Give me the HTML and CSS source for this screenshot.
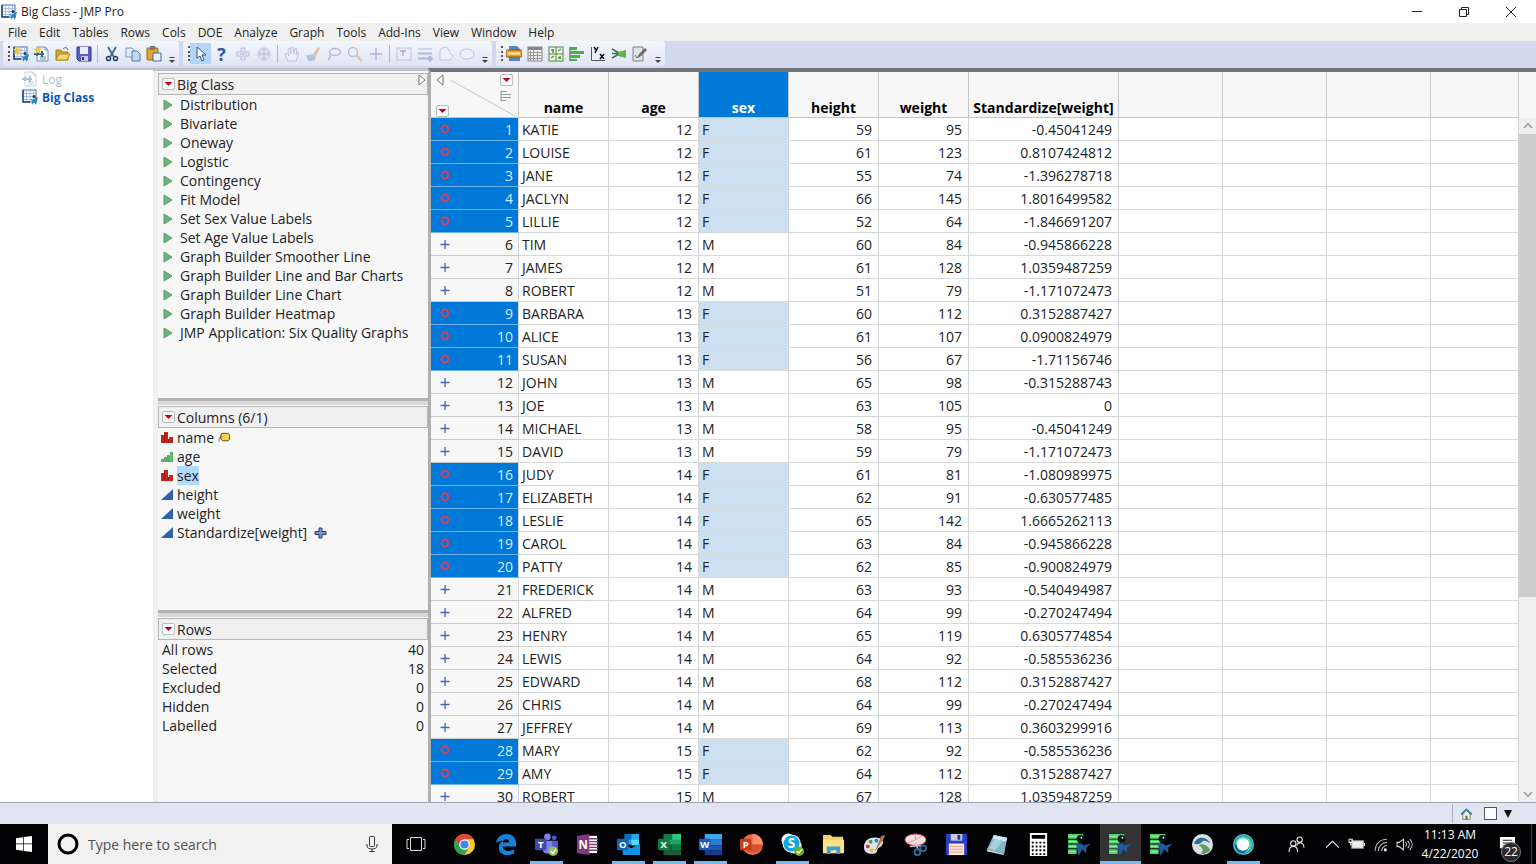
FILE: index.html
```html
<!DOCTYPE html>
<html lang="en">
<head>
  <meta charset="UTF-8">
  <meta name="viewport" content="width=device-width, initial-scale=1.0">
  <title>Big Class - JMP Pro</title>
  <link rel="stylesheet" href="styles.css">
</head>
<body>
<svg class="sprite" aria-hidden="true">
  <symbol id="i-table" viewBox="0 0 16 16">
    <rect x="1" y="1" width="13" height="12" fill="#f4f8fd" stroke="#4a6ea8"/>
    <path d="M1 4.500h13M1 7.500h13M1 10.500h13M4.500 1v12M8 1v12M11.500 1v12" stroke="#9db4d8" stroke-width=".8"/>
    <path d="M1 1v12h7" fill="none" stroke="#23477f" stroke-width="1.500"/>
    <path d="M8 10l3 1 2-2 3-1-1 4-1 4-2-3-2 3v-4z" fill="#2a86c4"/>
    <circle cx="12" cy="7.500" r="1.500" fill="#123f6e"/>
  </symbol>
  <symbol id="i-log" viewBox="0 0 16 16">
    <path d="M3 1h8l3 3v11H3z" fill="#f6f9fc" stroke="#6e8fb8"/>
    <path d="M11 1v3h3M6 11h6M6 13h6" fill="none" stroke="#6e8fb8"/>
    <path d="M0 8h10M8 5v6M3 6v4" fill="none" stroke="#33679f" stroke-width="2"/>
  </symbol>
  <symbol id="i-menu" viewBox="0 0 13 12">
    <rect x=".5" y=".5" width="12" height="11" rx="1.500" fill="#fdfdfd" stroke="#b5bcbc"/>
    <path d="M2.500 4h8L6.500 8z" fill="#c4001c"/>
  </symbol>
  <symbol id="i-run" viewBox="0 0 10 12">
    <path d="M1 1l8 5-8 5z" fill="#6db57c" stroke="#5a9a69"/>
  </symbol>
  <symbol id="i-nominal" viewBox="0 0 12 12">
    <path d="M0 3h3V0h4v7h1V5h4v6H0z" fill="#c4261c"/>
    <path d="M3.500 2v8M7.500 7v3" stroke="#8e1710" stroke-width=".8"/>
  </symbol>
  <symbol id="i-ordinal" viewBox="0 0 12 12">
    <path d="M0 8h3V6h3V4h3V1h3v10H0z" fill="#52b45e"/>
    <path d="M9.500 3v7" stroke="#82d08a"/>
  </symbol>
  <symbol id="i-continuous" viewBox="0 0 12 12">
    <path d="M0 11L12 0v11z" fill="#2f62ae"/>
  </symbol>
  <symbol id="i-chev" viewBox="0 0 8 8">
    <path d="M1.500 1.500h5" stroke="#444"/>
    <path d="M1 4h6L4 7z" fill="#444"/>
  </symbol>
  <symbol id="i-jmp" viewBox="0 0 24 24">
    <path d="M0 1h16v5H0zM0 7h11v4H0zM0 12h12v4H0zM0 17h9v5H0z" fill="#4fd06b"/>
    <path d="M1 3.500h12M1 9h8M1 14h8M1 19.500h7" stroke="#a4f5ac"/>
    <circle cx="13" cy="6" r="4" fill="#061018"/>
    <circle cx="14" cy="5" r="1" fill="#d8f5e0"/>
    <path d="M8 11l6 0 2 2 8-2-5 4 0 6-4-4-4 7-1-6z" fill="#215b9c"/>
  </symbol>
</svg>

<div class="window">
  <header class="titlebar">
    <svg class="ic16"><use href="#i-table"/></svg>
    <span class="title">Big Class - JMP Pro</span>
    <div class="winbtns">
      <button aria-label="Minimize"><svg viewBox="0 0 12 12"><path d="M1 5.500h10" stroke="#222"/></svg></button>
      <button aria-label="Restore"><svg viewBox="0 0 12 12"><path d="M1.500 3.500h7v7h-7zM3.500 3.500v-2h7v7h-2" fill="none" stroke="#222"/></svg></button>
      <button aria-label="Close"><svg viewBox="0 0 12 12"><path d="M1 1l10 10M11 1L1 11" stroke="#222"/></svg></button>
    </div>
  </header>

  <nav class="menubar">
    <button>File</button><button>Edit</button><button>Tables</button><button>Rows</button><button>Cols</button><button>DOE</button><button>Analyze</button><button>Graph</button><button>Tools</button><button>Add-Ins</button><button>View</button><button>Window</button><button>Help</button>
  </nav>

  <div class="toolbar">
    <div class="group">
      <span class="grip"></span>
      <button aria-label="New table"><svg viewBox="0 0 16 16"><use href="#i-table"/><path d="M4 0l1 2.500L8 3 6 5l1 3-3-1.500L1 8l1-3-2-2 3-.5z" fill="#f2c53d"/></svg></button>
      <button aria-label="New script"><svg viewBox="0 0 16 16"><use href="#i-log"/><path d="M4 0l1 2.500L8 3 6 5l1 3-3-1.500L1 8l1-3-2-2 3-.5z" fill="#f2c53d"/></svg></button>
      <button aria-label="Open"><svg viewBox="0 0 16 16"><path d="M1 14V4h5l1 2h6v8z" fill="#d9a32e" stroke="#a87412"/><path d="M1 14l3-6h11l-3 6z" fill="#f8d873" stroke="#b98a1f"/><path d="M8 3c2-2 4-2 5 1" fill="none" stroke="#555"/></svg></button>
      <button aria-label="Save"><svg viewBox="0 0 16 16"><path d="M1 1h14v14H3l-2-2z" fill="#5a60c5" stroke="#2c2f86"/><path d="M4 1h8v7H4z" fill="#e6eefc"/><path d="M5 10h7v5H5z" fill="#c9cbe8"/><path d="M6 11h2v3H6z" fill="#2c2f86"/></svg></button>
      <span class="sep"></span>
      <button aria-label="Cut"><svg viewBox="0 0 16 16"><path d="M4 1l6 10M12 1L6 11" stroke="#4a6488" stroke-width="1.800"/><circle cx="4.500" cy="12.500" r="2" fill="none" stroke="#1f3f70" stroke-width="1.500"/><circle cx="11.500" cy="12.500" r="2" fill="none" stroke="#1f3f70" stroke-width="1.500"/></svg></button>
      <button aria-label="Copy"><svg viewBox="0 0 16 16"><path d="M1 2h6l2 2v7H1z" fill="#e3ecf9" stroke="#7d97c6"/><path d="M7 5h5l3 3v7H7z" fill="#c3d5f2" stroke="#5577b5"/></svg></button>
      <button aria-label="Paste"><svg viewBox="0 0 16 16"><rect x="1" y="2" width="11" height="12" rx="1" fill="#e3a52c" stroke="#996612"/><rect x="4" y="0" width="5" height="4" fill="#777"/><path d="M7 7h8v8H7z" fill="#e8f0fb" stroke="#4a67a6"/></svg></button>
      <button class="chev" aria-label="More"><svg><use href="#i-chev"/></svg></button>
    </div>
    <div class="group">
      <span class="grip"></span>
      <button class="on" aria-label="Arrow"><svg viewBox="0 0 16 16"><path d="M4 1v11l3-2 2 5 2-1-2-5h4z" fill="#fff" stroke="#2c4f8c"/></svg></button>
      <button class="help" aria-label="Help"><b>?</b></button>
      <button disabled aria-label="Crosshairs"><svg viewBox="0 0 16 16"><path d="M6 2h4v4h4v4h-4v4H6v-4H2V6h4z" fill="#e1e6f3" stroke="#b7c0d8"/><path d="M8 5v6M5 8h6" stroke="#b7c0d8"/></svg></button>
      <button disabled aria-label="Scroller"><svg viewBox="0 0 16 16"><circle cx="8" cy="8" r="6" fill="#e1e6f3" stroke="#b7c0d8"/><path d="M8 3v10M3 8h10M6 5l2-2 2 2M6 11l2 2 2-2M5 6L3 8l2 2M11 6l2 2-2 2" fill="none" stroke="#b3bdd6"/></svg></button>
      <span class="sep"></span>
      <button disabled aria-label="Grabber"><svg viewBox="0 0 16 16"><path d="M4 15l-3-7 2-1 2 3-1-7 2-1 1 6V1h2l1 7 1-6 2 1-1 6 2-3 1 1-3 8z" fill="#eef1fa" stroke="#bcc4da"/></svg></button>
      <button disabled aria-label="Brush"><svg viewBox="0 0 16 16"><path d="M8 8l5-7 2 1-4 8z" fill="#e7b9a4"/><path d="M1 9c4 1 5-2 8 0s2 5-2 6-5-2-6-6z" fill="#b6c2dc"/></svg></button>
      <button disabled aria-label="Lasso"><svg viewBox="0 0 16 16"><ellipse cx="9" cy="6" rx="5.500" ry="3.500" fill="none" stroke="#b0bad6" stroke-width="1.500"/><path d="M5 8c-2 2 0 3-3 6" fill="none" stroke="#b0bad6" stroke-width="1.500"/></svg></button>
      <button disabled aria-label="Magnifier"><svg viewBox="0 0 16 16"><circle cx="6" cy="6" r="4.500" fill="#e9f0fb" stroke="#b4bfd9" stroke-width="1.500"/><path d="M9 9l6 6" stroke="#dcc8bc" stroke-width="2.500"/></svg></button>
      <button disabled aria-label="Plus"><svg viewBox="0 0 16 16"><path d="M8 2v12M2 8h12" stroke="#b3bedb" stroke-width="1.800"/></svg></button>
      <span class="sep"></span>
      <button disabled aria-label="Annotate"><svg viewBox="0 0 16 16"><rect x="1" y="2" width="14" height="12" fill="#e9edf8" stroke="#bcc5dd"/><path d="M4 5h6M7 5v5" stroke="#a5b0cd" stroke-width="1.500"/></svg></button>
      <button disabled aria-label="Line"><svg viewBox="0 0 16 16"><path d="M1 3h14" stroke="#b0bbd8"/><path d="M1 7.500h14" stroke="#b0bbd8" stroke-width="2"/><path d="M1 12.500h12M12 10l3 2.500-3 2.500" fill="none" stroke="#adb8d5" stroke-width="2"/></svg></button>
      <button disabled aria-label="Polygon"><svg viewBox="0 0 16 16"><path d="M2 4c3-4 8-3 9 0 1 3 0 3 3 5 2 2-1 5-4 5H2z" fill="#eef1fa" stroke="#bcc5dd"/></svg></button>
      <button disabled aria-label="Oval"><svg viewBox="0 0 16 16"><ellipse cx="8" cy="8" rx="7" ry="5" fill="#eef1fa" stroke="#bcc5dd"/></svg></button>
      <button class="chev" aria-label="More"><svg><use href="#i-chev"/></svg></button>
    </div>
    <div class="group">
      <span class="grip"></span>
      <button aria-label="Data filter"><svg viewBox="0 0 16 16"><path d="M3 0h8l3 3v12H3z" fill="#5b83c0"/><rect x="0" y="4" width="16" height="7" rx="1" fill="#f0a02c" stroke="#8f5c12"/><path d="M2 7.500h12" stroke="#fff0b5" stroke-width="2"/></svg></button>
      <button aria-label="Tabulate"><svg viewBox="0 0 16 16"><rect x="1" y="1" width="14" height="14" fill="#eee" stroke="#888"/><path d="M1 6.500h14M1 9.500h14M1 12.500h14M6.500 3v12M10.500 5v10M3.500 5v10" stroke="#999"/><path d="M1 2.500h14" stroke="#888" stroke-width="3"/></svg></button>
      <button aria-label="Graph builder"><svg viewBox="0 0 16 16"><rect x="1" y="1" width="14" height="14" fill="#eef7e9" stroke="#61803d"/><path d="M8 1v14M1 8h14" stroke="#61803d"/><path d="M3 4h3M10 5l3-2M3 12l3-2M10 12h3M5 3v4M12 10v3" stroke="#4c9e3c" stroke-width="1.500"/></svg></button>
      <button aria-label="Distribution"><svg viewBox="0 0 16 16"><path d="M1 1v14" stroke="#2c5c2c"/><path d="M1 1h7v3H1zM1 5h14v3H1zM1 9h10v3H1zM1 13h7v2H1z" fill="#51aa4b"/></svg></button>
      <button aria-label="Fit Y by X"><svg viewBox="0 0 16 16"><path d="M1.500 1v13.500H15" fill="none" stroke="#555"/><path d="M4 1l2 3M8 1L5 7M10 8l4 5M14 8l-4 5" stroke="#111" stroke-width="1.500"/></svg></button>
      <button aria-label="Fit model"><svg viewBox="0 0 16 16"><path d="M1 3l7 4M1 7.500h7M1 12l7-4" stroke="#3f6f57" stroke-width="1.500"/><path d="M7 6l8-2v8l-8-2z" fill="#65b14e"/></svg></button>
      <button aria-label="Edit script"><svg viewBox="0 0 16 16"><path d="M1 1h10v14H1z" fill="#dce6ea" stroke="#73858c"/><path d="M3 9l2 3 2-3" fill="none" stroke="#3e9159"/><path d="M6 12l1-4 6-6 2 2-6 6z" fill="#7b6666"/></svg></button>
      <button class="chev" aria-label="More"><svg><use href="#i-chev"/></svg></button>
    </div>
  </div>

  <main class="work">
    <aside class="tree">
      <a href="#" class="node dim"><svg class="ic16"><use href="#i-log"/></svg>Log</a>
      <a href="#" class="node current"><svg class="ic16"><use href="#i-table"/></svg>Big Class</a>
    </aside>

    <section class="panels">
      <div class="panel">
        <h2 class="panel-head"><button class="red" aria-label="Table menu"><svg><use href="#i-menu"/></svg></button>Big Class
          <button class="fold" aria-label="Hide panels"><svg viewBox="0 0 8 12"><path d="M1 1l6 5-6 5z" fill="#fff" stroke="#777"/></svg></button></h2>
        <ul class="scripts" id="scripts"></ul>
      </div>
      <div class="panel split">
        <h2 class="panel-head"><button class="red" aria-label="Columns menu"><svg><use href="#i-menu"/></svg></button>Columns (6/1)</h2>
        <ul class="columns">
          <li><svg><use href="#i-nominal"/></svg><span>name</span>
            <svg class="tag" viewBox="0 0 13 12"><path d="M4 1h7l1.500 1.500v5L11 9H5L3 7V3z" fill="#f5d44c" stroke="#4c4220"/><path d="M5 5C2 3 1 6 1 10" fill="none" stroke="#666"/></svg></li>
          <li><svg><use href="#i-ordinal"/></svg><span>age</span></li>
          <li><svg><use href="#i-nominal"/></svg><span class="picked">sex</span></li>
          <li><svg><use href="#i-continuous"/></svg><span>height</span></li>
          <li><svg><use href="#i-continuous"/></svg><span>weight</span></li>
          <li><svg><use href="#i-continuous"/></svg><span>Standardize[weight]</span>
            <svg class="formula" viewBox="0 0 13 12"><path d="M5 1h3v3.500h4v3H8V11H5V7.500H1v-3h4z" fill="#7d92cf" stroke="#27376f"/></svg></li>
        </ul>
      </div>
      <div class="panel split">
        <h2 class="panel-head"><button class="red" aria-label="Rows menu"><svg><use href="#i-menu"/></svg></button>Rows</h2>
        <table class="counts">
          <tr><th scope="row">All rows</th><td>40</td></tr>
          <tr><th scope="row">Selected</th><td>18</td></tr>
          <tr><th scope="row">Excluded</th><td>0</td></tr>
          <tr><th scope="row">Hidden</th><td>0</td></tr>
          <tr><th scope="row">Labelled</th><td>0</td></tr>
        </table>
      </div>
    </section>

    <section class="sheet">
      <div class="cells">
        <table class="data">
          <colgroup>
            <col class="c-row"><col class="c-std"><col class="c-std"><col class="c-std"><col class="c-std"><col class="c-std"><col class="c-wide"><col class="c-empty"><col class="c-empty"><col class="c-empty"><col>
          </colgroup>
          <thead>
            <tr>
              <th class="corner">
                <div class="corner-box">
                  <svg class="diag" viewBox="0 0 87 46" preserveAspectRatio="none"><path d="M19 8L84 45" stroke="#c4c8c4" fill="none"/></svg>
                  <div class="corner-side">
                    <svg class="back" viewBox="0 0 8 12"><path d="M7 1L1 6l6 5z" fill="#fff" stroke="#777"/></svg>
                    <button class="red" aria-label="Rows menu"><svg><use href="#i-menu"/></svg></button>
                  </div>
                  <div class="corner-side">
                    <button class="red" aria-label="Columns menu"><svg><use href="#i-menu"/></svg></button>
                    <svg class="bars" viewBox="0 0 12 12"><path d="M1 1v10M1 1.500h6M1 4.500h10M1 7.500h10M1 10.500h5" stroke="#8c9b98"/></svg>
                  </div>
                </div>
              </th>
              <th>name</th><th>age</th><th class="sel">sex</th><th>height</th><th>weight</th><th>Standardize[weight]</th><th></th><th></th><th></th><th></th>
            </tr>
          </thead>
          <tbody id="rows"></tbody>
        </table>
      </div>
      <div class="scroll">
        <button aria-label="Scroll up"><svg viewBox="0 0 10 6"><path d="M1 5l4-4 4 4" fill="none" stroke="#999" stroke-width="1.500"/></svg></button>
        <div class="track"><div class="thumb"></div></div>
        <button aria-label="Scroll down"><svg viewBox="0 0 10 6"><path d="M1 1l4 4 4-4" fill="none" stroke="#999" stroke-width="1.500"/></svg></button>
      </div>
    </section>
  </main>

  <footer class="status">
    <button aria-label="Home window"><svg viewBox="0 0 12 12"><path d="M2 6v6h8V6L6 2z" fill="#f0ead2" stroke="#8b8b74"/><path d="M0 6.500L6 1l6 5.500" fill="none" stroke="#2c83b8" stroke-width="2"/><path d="M5 8h2v4H5z" fill="#4c6a4a"/></svg></button>
    <input type="checkbox" aria-label="Arrange">
    <button aria-label="Window list"><svg viewBox="0 0 10 8"><path d="M1 0h8L5 8z" fill="#111"/></svg></button>
  </footer>
</div>

<div class="taskbar">
  <button class="start" aria-label="Start"><svg viewBox="0 0 16 16"><path d="M0 2.200L7 1.200V7.600H0zM7.700 1.100L16 0v7.600H7.700zM0 8.300h7v6.500l-7-1zM7.700 8.300H16V16l-8.300-1.100z" fill="#fff"/></svg></button>
  <label class="search">
    <svg class="ring" viewBox="0 0 22 22"><circle cx="11" cy="11" r="9" fill="none" stroke="#000" stroke-width="3"/></svg>
    <input type="text" placeholder="Type here to search" aria-label="Type here to search">
    <svg class="mic" viewBox="0 0 12 16"><rect x="3.500" y=".5" width="5" height="10" rx="1" fill="none" stroke="#333"/><path d="M1 8v2c0 4 10 4 10 0V8M6 13v2M3.500 15.500h5" fill="none" stroke="#333"/></svg>
  </label>
  <button class="taskview" aria-label="Task view"><svg viewBox="0 0 20 16"><path d="M4.500 1.500h11v13h-11zM3 3.500H1v9h2M17 3.500h2v9h-2" fill="none" stroke="#ddd"/></svg></button>
  <div class="apps">
    <button aria-label="Chrome"><svg viewBox="0 0 24 24"><circle cx="12" cy="12" r="11" fill="#fbc926"/><path d="M12 6.500H21.500A11 11 0 0 0 2.500 6.500L7 14z" fill="#dc4a3a"/><path d="M2.500 6.500A11 11 0 0 0 12 23l5-8.500-9.500 0z" fill="#2da251"/><circle cx="12" cy="12" r="5.500" fill="#fff"/><circle cx="12" cy="12" r="4.300" fill="#4485e8"/></svg></button>
    <button aria-label="Edge"><svg viewBox="0 0 24 24"><path d="M2 11C3 4 8 1 13 1c7 0 10 5 10 10v3H9c0 5 7 6 12 3v4C14 25 5 23 5 15c0-4 2-6 5-7-6 0-7 2-8 3zM9 10h7c0-5-6-5-7 0z" fill="#1682d8"/></svg></button>
    <button class="open" aria-label="Teams"><svg viewBox="0 0 24 24"><circle cx="13" cy="4" r="3.500" fill="#7b83eb"/><circle cx="20" cy="5" r="2.500" fill="#5059c9"/><path d="M8 8h11v9c0 6-11 6-11 0z" fill="#7b83eb"/><path d="M18 8h6v7c0 3-3 4-6 3z" fill="#5059c9"/><rect x="0" y="6" width="12" height="12" rx="1" fill="#4149b0"/><circle cx="19" cy="19" r="5" fill="#92c353"/><path d="M16.500 19l2 2 3.500-4" fill="none" stroke="#fff" stroke-width="1.500"/><text x="6" y="15.500" class="glyph">T</text></svg></button>
    <button aria-label="OneNote"><svg viewBox="0 0 24 24"><path d="M12 3h10v18H12z" fill="#fff"/><path d="M14 6h9M14 9h9M14 12h9M14 15h9M14 18h9" stroke="#80397b" stroke-width="1.500"/><path d="M1 3l13-2v22L1 21z" fill="#80397b"/><text x="7.500" y="16.500" class="glyph big">N</text></svg></button>
    <button class="open" aria-label="Outlook"><svg viewBox="0 0 24 24"><path d="M8 1h15v11H8z" fill="#28a8ea"/><path d="M8 1h7v6H8z" fill="#0f6cbd"/><path d="M15 7h8v6h-8z" fill="#50d9ff"/><path d="M6 11l9 5 9-5v12H6z" fill="#1490df"/><rect x="0" y="6" width="12" height="12" rx="1" fill="#0f64b4"/><text x="6" y="15.500" class="glyph">O</text></svg></button>
    <button class="open" aria-label="Excel"><svg viewBox="0 0 24 24"><path d="M6 1h18v22H6z" fill="#21a366"/><path d="M6 1h9v6H6z" fill="#107c41"/><path d="M15 1h9v6h-9z" fill="#33c481"/><path d="M6 12h18v11H6z" fill="#185c37"/><path d="M15 12h9v6h-9z" fill="#107c41"/><rect x="0" y="6" width="12" height="12" rx="1" fill="#107c41"/><text x="6" y="15.500" class="glyph">X</text></svg></button>
    <button class="open" aria-label="Word"><svg viewBox="0 0 24 24"><path d="M6 1h18v6H6z" fill="#41a5ee"/><path d="M6 7h18v6H6z" fill="#2b7cd3"/><path d="M6 13h18v5H6z" fill="#185abd"/><path d="M6 18h18v5H6z" fill="#103f91"/><rect x="0" y="6" width="12" height="12" rx="1" fill="#185abd"/><text x="6" y="15.500" class="glyph">W</text></svg></button>
    <button aria-label="PowerPoint"><svg viewBox="0 0 24 24"><circle cx="13" cy="12" r="11" fill="#ed6c47"/><path d="M13 1a11 11 0 0 1 11 11H13z" fill="#ff8f6b"/><path d="M2.500 12h21.500a11 11 0 0 1-21.500 0z" fill="#d35230"/><rect x="0" y="6" width="12" height="12" rx="1" fill="#c43e1c"/><text x="6" y="15.500" class="glyph">P</text></svg></button>
    <button class="open" aria-label="Skype"><svg viewBox="0 0 24 24"><circle cx="7.500" cy="7.500" r="7" fill="#e8f7fd"/><circle cx="14" cy="14" r="7.500" fill="#e8f7fd"/><circle cx="11" cy="11" r="9.500" fill="#e8f7fd"/><circle cx="11" cy="11" r="8.300" fill="#12a5e0"/><text x="11" y="16" class="glyph skype">S</text><circle cx="19" cy="19" r="5" fill="#6bb120"/><path d="M16.500 19l2 2 3.500-4" fill="none" stroke="#fff" stroke-width="1.500"/></svg></button>
    <button aria-label="File Explorer"><svg viewBox="0 0 24 24"><path d="M1 2h8l2 2h11v17H1z" fill="#f3cf69"/><path d="M1 7h22v14H1z" fill="#fde08c"/><path d="M5 22v-8h14v8h-4v-4H9v4z" fill="#3f9fd5"/></svg></button>
    <button aria-label="Paint"><svg viewBox="0 0 24 24"><path d="M1 15C1 7 8 4 15 5c8 1 7 8 2 10-3 1-1 4-4 6-5 2-12 0-12-6z" fill="#d9e3ee"/><circle cx="5" cy="14" r="2" fill="#d23a3a"/><circle cx="8" cy="9" r="2" fill="#35a253"/><circle cx="14" cy="8" r="2" fill="#3878cd"/><circle cx="9" cy="18" r="2" fill="#efb92c"/><path d="M12 20l7-17 4-1-2 5z" fill="#ba7a3f"/></svg></button>
    <button aria-label="Snipping Tool"><svg viewBox="0 0 24 24"><ellipse cx="12" cy="7" rx="11" ry="6" fill="#f2dfe1" stroke="#c8494c"/><path d="M12 7L3 11M12 7l7-4M12 7V1" stroke="#dd9a9c"/><path d="M6 14l12-1M12 10l3 8" stroke="#c5cad6" stroke-width="1.500"/><circle cx="14" cy="20" r="3" fill="none" stroke="#36669f" stroke-width="2"/><circle cx="20" cy="16" r="3" fill="none" stroke="#36669f" stroke-width="2"/></svg></button>
    <button aria-label="Floppy"><svg viewBox="0 0 24 24"><path d="M1 1h22v22H1z" fill="#2c3fc4"/><path d="M6 1h12v7H6z" fill="#c4cbd8"/><path d="M13 2h3v5h-3z" fill="#25359f"/><path d="M4 11h16v12H4z" fill="#fbe6de"/><path d="M5 14h14M5 17h14M5 20h14" stroke="#e39b8d"/></svg></button>
    <button aria-label="Notes"><svg viewBox="0 0 24 24"><path d="M8 2l14 3-3 17L1 17z" fill="#7db9c4"/><path d="M8 2l14 3-1 4L7 6z" fill="#cde8ee"/><path d="M1 17l18 5-1 1L1 19z" fill="#d8dadb"/><path d="M9 6l9 2-9 10-6-2z" fill="#a5d3db"/></svg></button>
    <button aria-label="Calculator"><svg viewBox="0 0 24 24"><path d="M3 0h18v24H3z" fill="#fff"/><path d="M5 2h14v4H5z" fill="#000"/><path d="M5 10h14M5 14h14M5 18h14M5 22h14" stroke="#000" stroke-width="2" stroke-dasharray="2 2"/></svg></button>
    <button aria-label="JMP"><svg><use href="#i-jmp"/></svg></button>
    <button class="open active" aria-label="JMP Pro"><svg><use href="#i-jmp"/></svg></button>
    <button aria-label="JMP Trial"><svg><use href="#i-jmp"/></svg></button>
    <button aria-label="VPN"><svg viewBox="0 0 24 24"><circle cx="12" cy="12" r="11" fill="#d9e0e2"/><path d="M3 11C6 3 17 3 20 11c-4-3-7-4-9-1-2 2-6 2-8 1z" fill="#2d6f9d"/><path d="M8 13c4-3 10 0 12 5-4 4-8 5-10 3 4-2 2-6-2-8z" fill="#5e9f5f"/></svg></button>
    <button class="open" aria-label="Webex"><svg viewBox="0 0 24 24"><circle cx="12" cy="12" r="11" fill="#4cc0e0"/><circle cx="12" cy="12" r="9.500" fill="#0c6a94"/><path d="M3 12a9 9 0 0 1 18 0c0 5-4 9-9 9 4-2 6-5 6-9z" fill="#4fd7a0"/><circle cx="11.500" cy="12" r="6.500" fill="#fff"/></svg></button>
  </div>
  <div class="tray">
    <button class="people" aria-label="People"><svg viewBox="0 0 16 16"><circle cx="5" cy="7" r="2.500" fill="none" stroke="#eee"/><circle cx="11" cy="3.500" r="2.500" fill="none" stroke="#eee"/><path d="M1 15c0-7 8-7 8 0M8 9c2-4 7-3 7 2" fill="none" stroke="#eee"/></svg></button>
    <button aria-label="Show hidden icons"><svg viewBox="0 0 16 16"><path d="M2 11l6-6 6 6" fill="none" stroke="#eee"/></svg></button>
    <button aria-label="Battery"><svg viewBox="0 0 16 16"><path d="M3.500 4.500h11v7h-11z" fill="#eee" stroke="#999"/><path d="M15.500 6.500v3M1 3v3h3V3zM2.500 6v3" fill="none" stroke="#eee"/></svg></button>
    <button aria-label="Network"><svg viewBox="0 0 16 16"><path d="M3 14C3 8 7 3 14 3M6 14c0-4 3-8 8-8M9 14c0-2 2-5 5-5" fill="none" stroke="#bbb"/><circle cx="12.500" cy="13" r="1.500" fill="#eee"/></svg></button>
    <button aria-label="Volume"><svg viewBox="0 0 16 16"><path d="M1 6h2l4-3v10l-4-3H1zM9 6c1 1 1 3 0 4M11 4.500c2 2 2 5 0 7M13 3c3 3 3 7 0 10" fill="none" stroke="#ddd"/></svg></button>
    <div class="clock"><span>11:13 AM</span><span>4/22/2020</span></div>
    <button class="notes" aria-label="Notifications"><svg viewBox="0 0 18 16"><path d="M1 0h16v12H8l-4 4v-4H1z" fill="#fff"/><path d="M4 3.500h10M4 6.500h10M4 9.500h7" stroke="#111"/></svg><span class="badge">22</span></button>
  </div>
</div>
<script src="script.js"></script>
</body>
</html>
```
FILE: styles.css
```css
* {
  box-sizing: border-box;
}

body {
  margin: 0;
  height: 100vh;
  display: flex;
  flex-direction: column;
  overflow: hidden;
  background: #f0f0f0;
  color: #222;
  font-family: "Open Sans", "Noto Sans", sans-serif;
  font-size: 14px;
}

button {
  display: flex;
  align-items: center;
  justify-content: center;
  flex: none;
  margin: 0;
  padding: 0;
  border: none;
  background: none;
  color: inherit;
  font: inherit;
}

svg {
  display: block;
  flex: none;
}

ul {
  list-style: none;
  margin: 0;
  padding: 0;
}

.sprite {
  display: none;
}

.ic16 {
  width: 16px;
  height: 16px;
}

.window {
  flex: 1;
  min-height: 0;
  display: flex;
  flex-direction: column;
}

/* title and menus */
.titlebar {
  display: flex;
  align-items: center;
  height: 23px;
  padding: 0 2px 0 1px;
  gap: 4px;
  background: #fff;
  font-size: 12px;
}

.winbtns {
  display: flex;
  margin-left: auto;
}

.winbtns button {
  width: 47px;
  height: 23px;
}

.winbtns svg {
  width: 12px;
  height: 12px;
}

.menubar {
  display: flex;
  align-items: center;
  height: 18px;
  padding-left: 8px;
  gap: 12px;
  font-size: 12px;
}

.toolbar {
  display: flex;
  gap: 4px;
  height: 27px;
  padding-left: 3px;
  background: #d3d9ec;
}

.group {
  display: flex;
  align-items: center;
  height: 25px;
  border-radius: 3px;
  background: linear-gradient(#f3f6fd, #e0e5f5);
}

.group button {
  width: 21px;
  height: 21px;
}

.group svg {
  width: 16px;
  height: 16px;
}

.group .on {
  background: #b5d5f8;
}

.group .help {
  color: #2c55a8;
  font-size: 18px;
}

.group .chev {
  width: 15px;
  align-items: flex-end;
}

.group .chev svg {
  width: 8px;
  height: 8px;
}

.grip {
  width: 7px;
  height: 15px;
  border-right: 2px dotted #555;
}

.sep {
  width: 1px;
  height: 18px;
  margin: 0 3px;
  background: #b3b9ca;
}

/* work area */
.work {
  flex: 1;
  min-height: 0;
  display: flex;
  border-bottom: 1px solid #9ea4b0;
}

.tree {
  width: 153px;
  border-top: 2px solid #bcc3cc;
  background: #fff;
}

.node {
  display: flex;
  align-items: center;
  gap: 4px;
  height: 18px;
  padding-left: 22px;
  color: #0a58b8;
  font-size: 12px;
  text-decoration: none;
}

.dim {
  color: #a9bdcc;
}

.dim svg {
  opacity: .4;
}

.current {
  font-weight: bold;
}

.panels {
  width: 275px;
  display: grid;
  grid-template-rows: 327fr 212fr 192fr;
  padding-left: 5px;
  border-top: 3px solid #bcc3cc;
}

.panel {
  min-height: 0;
  overflow: hidden;
  padding-top: 2px;
  background: #f7f7f7;
}

.split {
  padding-top: 5px;
  border-top: 3px solid #b3b3b3;
  background: linear-gradient(#d8d8d8 4px, #f7f7f7 4px);
}

.panel-head {
  display: flex;
  align-items: center;
  gap: 2px;
  height: 22px;
  margin: 0;
  padding-left: 3px;
  border: 1px solid #b5b5b5;
  background: #f0f0f0;
  font-size: 14px;
  font-weight: normal;
}

.red svg {
  width: 13px;
  height: 12px;
}

.fold {
  margin: 0 1px 8px auto;
}

.fold svg,
.back {
  width: 8px;
  height: 12px;
}

.scripts li,
.columns li {
  display: flex;
  align-items: center;
  height: 19px;
}

.scripts li {
  gap: 7px;
  padding-left: 5px;
}

.scripts svg {
  width: 10px;
  height: 12px;
}

.columns li {
  gap: 4px;
  padding-left: 3px;
}

.columns svg {
  width: 12px;
  height: 12px;
}

.columns .formula {
  width: 13px;
  margin-left: 3px;
}

.picked {
  background: #b3d9ff;
}

.counts {
  width: 100%;
  border-collapse: collapse;
}

.counts th,
.counts td {
  height: 19px;
  padding: 0 4px;
  font-weight: normal;
  line-height: 19px;
  text-align: left;
}

.counts td {
  text-align: right;
}

/* data grid */
.sheet {
  flex: 1;
  min-width: 0;
  display: flex;
  border-top: 4px solid #75737b;
  border-left: 3px solid #b0b0b0;
  background: #f7f7f7;
}

.cells {
  flex: 1;
  min-width: 0;
  overflow: hidden;
}

.data {
  width: 100%;
  table-layout: fixed;
  border-collapse: separate;
  border-spacing: 0;
}

.c-row {
  width: 88px;
}

.c-std {
  width: 90px;
}

.c-wide {
  width: 150px;
}

.c-empty {
  width: 104px;
}

.data th,
.data td {
  height: 23px;
  padding: 2px 6px 0 3px;
  border-right: 1px solid #d2d5d8;
  border-bottom: 1px solid #d9d9d9;
  background: #fff;
  line-height: 20px;
  text-align: left;
  white-space: nowrap;
}

.data .num {
  text-align: right;
}

.data thead th {
  height: 46px;
  padding: 0;
  background: #f7f7f7;
  border-color: #c6c6c6;
  color: #000;
  line-height: 19px;
  text-align: center;
  vertical-align: bottom;
}

.data thead .sel {
  background: #0078d7;
  color: #fff;
}

.corner-box {
  position: relative;
  display: flex;
  justify-content: space-between;
  height: 45px;
  padding: 2px 5px 0;
}

.diag {
  position: absolute;
  inset: 0;
  width: 100%;
  height: 100%;
}

.corner-side {
  display: flex;
  flex-direction: column;
  justify-content: space-between;
}

.bars {
  width: 12px;
  height: 12px;
  margin-bottom: 15px;
}

.data tbody th {
  padding: 2px 5px 0 8px;
  background: #f7f7f7;
  border-bottom-color: #c9c9c9;
  font-weight: normal;
}

.data .selected th {
  background: #0078d7;
  border-bottom-color: #6cb2ea;
  color: #d8ecff;
}

.data .selected .sex {
  background: #cce0f2;
}

.rowhead {
  display: flex;
  align-items: center;
  justify-content: space-between;
}

.rowhead svg {
  width: 12px;
  height: 12px;
}

.scroll {
  width: 17px;
  display: flex;
  flex-direction: column;
  margin-top: 46px;
  background: #f0f0f0;
}

.scroll button {
  height: 16px;
}

.scroll svg {
  width: 10px;
  height: 6px;
}

.track {
  flex: 1;
}

.thumb {
  height: 71%;
  background: #cdcdcd;
}

.status {
  display: flex;
  align-items: center;
  justify-content: flex-end;
  gap: 6px;
  height: 21px;
  padding-right: 23px;
  background: #dfe5f1;
}

.status button {
  padding-left: 8px;
  height: 19px;
}

.status button:first-child {
  margin-right: 6px;
  border-left: 1px solid #aab2c2;
}

.status button:last-child {
  padding: 0;
}

.status svg {
  width: 11px;
  height: 12px;
}

.status button:last-child svg {
  width: 10px;
  height: 8px;
}

.status input {
  appearance: none;
  width: 13px;
  height: 13px;
  margin: 0;
  border: 1px solid #555;
  background: #fff;
}

/* taskbar */
.taskbar {
  display: flex;
  height: 40px;
  background: #030305;
  color: #fff;
}

.start {
  width: 48px;
}

.start svg {
  width: 16px;
  height: 16px;
}

.search {
  display: flex;
  align-items: center;
  width: 344px;
  padding: 0 14px 0 9px;
  background: #f1f1f1;
}

.ring {
  width: 22px;
  height: 22px;
}

.search input {
  flex: 1;
  min-width: 0;
  padding: 0 9px;
  border: none;
  background: none;
  font: inherit;
}

.search input::placeholder {
  color: #505050;
}

.mic {
  width: 12px;
  height: 16px;
}

.taskview {
  width: 48px;
}

.taskview svg {
  width: 20px;
  height: 16px;
}

.apps {
  display: flex;
  padding-left: 4px;
}

.apps button {
  width: 41px;
}

.apps svg {
  width: 23px;
  height: 23px;
}

.apps .open {
  background: linear-gradient(#76b9ed, #76b9ed) center bottom / 33px 3px no-repeat;
}

.apps .active {
  background: linear-gradient(#76b9ed, #76b9ed) center bottom / 41px 3px no-repeat #333;
}

.glyph {
  fill: #fff;
  font-size: 10px;
  font-weight: bold;
  text-anchor: middle;
}

.big {
  font-size: 12px;
}

.skype {
  font-size: 14px;
}

.tray {
  display: flex;
  align-items: center;
  margin-left: auto;
  margin-right: 4px;
  border-right: 1px solid #444;
}

.tray button {
  width: 24px;
  height: 40px;
}

.tray .people {
  width: 48px;
}

.tray svg {
  width: 17px;
  height: 17px;
}

.clock {
  display: flex;
  flex-direction: column;
  align-items: center;
  width: 68px;
  font-size: 12px;
  line-height: 19px;
}

.tray .notes {
  position: relative;
  width: 47px;
}

.badge {
  position: absolute;
  left: 17px;
  bottom: 2px;
  width: 20px;
  height: 20px;
  border: 1px solid #777;
  border-radius: 50%;
  background: #2c2c2c;
  font-size: 12px;
  line-height: 18px;
}
```
FILE: script.js
```js
const scripts = [
  'Distribution', 'Bivariate', 'Oneway', 'Logistic', 'Contingency', 'Fit Model',
  'Set Sex Value Labels', 'Set Age Value Labels', 'Graph Builder Smoother Line',
  'Graph Builder Line and Bar Charts', 'Graph Builder Line Chart',
  'Graph Builder Heatmap', 'JMP Application: Six Quality Graphs'
];

// name, age, sex, height, weight, Standardize[weight]
const students = [
  ['KATIE', 12, 'F', 59, 95, '-0.45041249'],
  ['LOUISE', 12, 'F', 61, 123, '0.8107424812'],
  ['JANE', 12, 'F', 55, 74, '-1.396278718'],
  ['JACLYN', 12, 'F', 66, 145, '1.8016499582'],
  ['LILLIE', 12, 'F', 52, 64, '-1.846691207'],
  ['TIM', 12, 'M', 60, 84, '-0.945866228'],
  ['JAMES', 12, 'M', 61, 128, '1.0359487259'],
  ['ROBERT', 12, 'M', 51, 79, '-1.171072473'],
  ['BARBARA', 13, 'F', 60, 112, '0.3152887427'],
  ['ALICE', 13, 'F', 61, 107, '0.0900824979'],
  ['SUSAN', 13, 'F', 56, 67, '-1.71156746'],
  ['JOHN', 13, 'M', 65, 98, '-0.315288743'],
  ['JOE', 13, 'M', 63, 105, '0'],
  ['MICHAEL', 13, 'M', 58, 95, '-0.45041249'],
  ['DAVID', 13, 'M', 59, 79, '-1.171072473'],
  ['JUDY', 14, 'F', 61, 81, '-1.080989975'],
  ['ELIZABETH', 14, 'F', 62, 91, '-0.630577485'],
  ['LESLIE', 14, 'F', 65, 142, '1.6665262113'],
  ['CAROL', 14, 'F', 63, 84, '-0.945866228'],
  ['PATTY', 14, 'F', 62, 85, '-0.900824979'],
  ['FREDERICK', 14, 'M', 63, 93, '-0.540494987'],
  ['ALFRED', 14, 'M', 64, 99, '-0.270247494'],
  ['HENRY', 14, 'M', 65, 119, '0.6305774854'],
  ['LEWIS', 14, 'M', 64, 92, '-0.585536236'],
  ['EDWARD', 14, 'M', 68, 112, '0.3152887427'],
  ['CHRIS', 14, 'M', 64, 99, '-0.270247494'],
  ['JEFFREY', 14, 'M', 69, 113, '0.3603299916'],
  ['MARY', 15, 'F', 62, 92, '-0.585536236'],
  ['AMY', 15, 'F', 64, 112, '0.3152887427'],
  ['ROBERT', 15, 'M', 67, 128, '1.0359487259']
];

const circle = '<svg viewBox="0 0 12 12"><circle cx="6" cy="5" r="3.5" fill="none" stroke="#d9405f" stroke-width="1.8"/></svg>';
const plus = '<svg viewBox="0 0 12 12"><path d="M6 1v9M1.5 5.500h9" stroke="#4468b8" stroke-width="1.3"/></svg>';

document.getElementById('scripts').innerHTML = scripts.map(name =>
  `<li><button aria-label="Run ${name}"><svg><use href="#i-run"/></svg></button><span>${name}</span></li>`
).join('');

document.getElementById('rows').innerHTML = students.map(([name, age, sex, height, weight, std], i) => `
  <tr class="${sex === 'F' ? 'selected' : ''}">
    <th scope="row"><div class="rowhead">${sex === 'F' ? circle : plus}<span>${i + 1}</span></div></th>
    <td>${name}</td><td class="num">${age}</td><td class="sex">${sex}</td>
    <td class="num">${height}</td><td class="num">${weight}</td><td class="num">${std}</td>
    <td></td><td></td><td></td><td></td>
  </tr>`).join('');
```
